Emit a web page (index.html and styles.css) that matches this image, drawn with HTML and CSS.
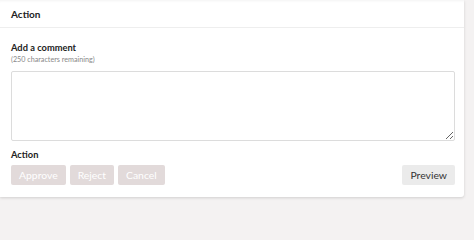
FILE: index.html
```html
<!DOCTYPE html>
<html>
<head>
<meta charset="utf-8">
<link rel="stylesheet" href="styles.css">
</head>
<body>
<div class="card">
  <div class="card-header">Action</div>
  <div class="card-body">
    <div class="label">Add a comment</div>
    <div class="hint">(250 characters remaining)</div>
    <textarea class="comment"></textarea>
    <div class="label action-label">Action</div>
    <div class="actions">
      <div class="group">
        <button class="btn disabled">Approve</button>
        <button class="btn disabled">Reject</button>
        <button class="btn disabled">Cancel</button>
      </div>
      <button class="btn preview">Preview</button>
    </div>
  </div>
</div>
</body>
</html>
```
FILE: styles.css
```css
html, body {
  margin: 0;
  padding: 0;
  background: #f4f2f2;
  font-family: Lato, "Liberation Sans", sans-serif;
  color: #222;
}
body {
  width: 474px;
  height: 209px;
  overflow: hidden;
}
.card {
  width: 464px;
  background: #fff;
  box-shadow: 0 1px 3px rgba(0,0,0,0.15);
  border-radius: 0 0 3px 0;
}
.card-header {
  height: 27px;
  line-height: 29px;
  padding-left: 11px;
  font-size: 10px;
  font-weight: bold;
  border-bottom: 1px solid #eeeeee;
  box-shadow: inset 0 3px 3px -2px rgba(0,0,0,0.05);
}
.card-body {
  padding: 13px 9px 12px 11px;
}
.label {
  font-size: 9.3px;
  font-weight: bold;
  line-height: 13px;
}
.hint {
  font-size: 7.2px;
  color: #888;
  line-height: 10px;
  margin-top: 1px;
}
.comment {
  display: block;
  box-sizing: border-box;
  width: 444px;
  height: 70px;
  margin: 6px 0 7px;
  border: 1px solid #dcdcdc;
  border-radius: 2px;
  resize: vertical;
  background: #fff;
}
.action-label {
  margin-bottom: 4px;
}
.actions {
  display: flex;
  justify-content: space-between;
  align-items: center;
}
.group {
  display: flex;
  gap: 4px;
}
.btn {
  font-family: Lato, "Liberation Sans", sans-serif;
  font-size: 10.4px;
  height: 20px;
  padding: 0 8px;
  border: none;
  border-radius: 2px;
}
.btn.disabled {
  background: #e2dada;
  color: #fff;
}
.btn.preview {
  background: #ebebeb;
  color: #333;
  padding: 0 8px;
}
```
